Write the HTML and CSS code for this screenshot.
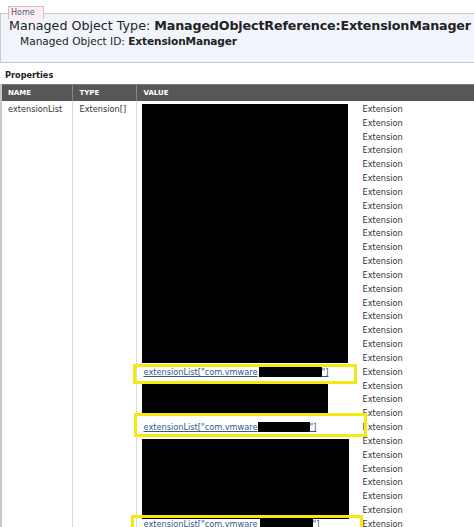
FILE: index.html
```html
<!DOCTYPE html>
<html lang="en">
<head>
    <meta charset="UTF-8">
    <meta name="viewport" content="width=device-width, initial-scale=1.0">
    <title>Managed Object Browser</title>
    <link rel="stylesheet" href="styles.css">
</head>
<body>
    <div class="tabs">
        <a class="tab" href="#">Home</a>
    </div>

    <div class="objhead">
        <h1>Managed Object Type: <b>ManagedObjectReference:ExtensionManager</b></h1>
        <h2>Managed Object ID: <b>ExtensionManager</b></h2>
    </div>

    <h3 class="section">Properties</h3>

    <table class="props">
        <colgroup>
            <col class="c-name">
            <col class="c-type">
            <col>
        </colgroup>
        <thead>
            <tr><th>NAME</th><th>TYPE</th><th>VALUE</th></tr>
        </thead>
        <tbody>
            <tr>
                <td>extensionList</td>
                <td>Extension[]</td>
                <td class="value">
                    <div class="vlist">
                        <div class="redact redact-a"></div>
                        <div class="link-row row-20 mark-a">
                            <a href="#">extensionList["com.vmware<span class="hide hide-a"></span>"]</a>
                        </div>
                        <div class="redact redact-b"></div>
                        <div class="link-row row-24 mark-b">
                            <a href="#">extensionList["com.vmware<span class="hide hide-b"></span>"]</a>
                        </div>
                        <div class="redact redact-c"></div>
                        <div class="link-row row-31 mark-c">
                            <a href="#">extensionList["com.vmware<span class="hide hide-c"></span>"]</a>
                        </div>

                        <div class="ext">Extension</div>
                        <div class="ext">Extension</div>
                        <div class="ext">Extension</div>
                        <div class="ext">Extension</div>
                        <div class="ext">Extension</div>
                        <div class="ext">Extension</div>
                        <div class="ext">Extension</div>
                        <div class="ext">Extension</div>
                        <div class="ext">Extension</div>
                        <div class="ext">Extension</div>
                        <div class="ext">Extension</div>
                        <div class="ext">Extension</div>
                        <div class="ext">Extension</div>
                        <div class="ext">Extension</div>
                        <div class="ext">Extension</div>
                        <div class="ext">Extension</div>
                        <div class="ext">Extension</div>
                        <div class="ext">Extension</div>
                        <div class="ext">Extension</div>
                        <div class="ext">Extension</div>
                        <div class="ext">Extension</div>
                        <div class="ext">Extension</div>
                        <div class="ext">Extension</div>
                        <div class="ext">Extension</div>
                        <div class="ext">Extension</div>
                        <div class="ext">Extension</div>
                        <div class="ext">Extension</div>
                        <div class="ext">Extension</div>
                        <div class="ext">Extension</div>
                        <div class="ext">Extension</div>
                        <div class="ext">Extension</div>
                    </div>
                </td>
            </tr>
        </tbody>
    </table>
</body>
</html>
```

FILE: styles.css
```css
*{
    margin: 0px;
    padding: 0px;
    box-sizing: border-box;
}

body{
    font-family: "DejaVu Sans", Verdana, sans-serif;
    color: #333;
    background-color: white;
    overflow: hidden;
}

/* tab strip */
.tabs{
    height: 13px;
    padding-left: 8px;
}

.tab{
    display: inline-block;
    height: 13px;
    padding: 0px 8px 0px 2px;
    font-size: 8px;
    line-height: 12px;
    color: #4c5d8c;
    text-decoration: none;
    background-color: #fcedf0;
    border: 1px solid #dcbcc4;
    border-bottom: none;
}

/* object header */
.objhead{
    border: 1px solid #c6cad1;
    border-right: none;
    background-color: #f1f5fb;
    padding: 4px 0px 14px 8px;
    white-space: nowrap;
    height: 50px;
}

.objhead h1{
    font-size: 12.7px;
    line-height: 15px;
    font-weight: normal;
    color: #222;
}

.objhead h2{
    font-size: 10.6px;
    line-height: 13px;
    font-weight: normal;
    color: #222;
    margin-top: 2px;
    padding-left: 11px;
}

.objhead b{
    font-weight: bold;
    letter-spacing: -0.15px;
}

.section{
    font-size: 8.2px;
    line-height: 10px;
    font-weight: bold;
    color: #222;
    margin: 7px 0px 4px 5px;
}

/* property table */
.props{
    width: 100%;
    border-collapse: collapse;
    table-layout: fixed;
    border-left: 2px solid #c8c8c8;
}

.c-name{ width: 71px; }
.c-type{ width: 64px; }

.props th{
    background-color: #575757;
    color: white;
    font-size: 7px;
    line-height: 16px;
    height: 16px;
    text-align: left;
    padding-left: 7px;
    border-left: 1px solid #8a8a8a;
    border-top: 1px solid #7a7a7a;
}

.props th:first-child{
    border-left: none;
    padding-left: 6px;
}

.props td{
    vertical-align: top;
    font-size: 8.2px;
    line-height: 13.83px;
    padding: 2px 0px 0px 7px;
    border-left: 1px solid #dadada;
    white-space: nowrap;
}

.props td:first-child{
    border-left: none;
    padding-left: 6px;
}

.vlist{
    display: grid;
    grid-template-columns: 219px auto;
    grid-auto-rows: 13.83px;
}

.ext{
    grid-column: 2;
}

/* blacked out values */
.redact{
    grid-column: 1;
    background-color: #000;
    margin-left: -2px;
}

.redact-a{
    grid-row: 1 / span 19;
    width: 206px;
    margin-top: 1px;
    margin-bottom: 3px;
}

.redact-b{
    grid-row: 21 / span 3;
    width: 186px;
    margin-top: 2.5px;
    margin-bottom: 8px;
}

.redact-c{
    grid-row: 25 / span 6;
    width: 207px;
    margin-top: 4px;
    margin-bottom: -1px;
}

.link-row{
    grid-column: 1;
    position: relative;
}

.row-20{ grid-row: 20; }
.row-24{ grid-row: 24; }
.row-31{ grid-row: 31; }

.link-row a{
    color: #34568b;
    text-decoration: underline;
}

.hide{
    display: inline-block;
    height: 10px;
    background-color: #000;
    vertical-align: -2px;
}

.hide-a{ width: 63px; margin-left: 1px; }
.hide-b{ width: 52px; }
.hide-c{ width: 53px; margin-left: 2px; }

/* yellow highlight boxes */
.link-row::after{
    content: "";
    position: absolute;
    border: 3px solid #f6e912;
}

.mark-a::after{ top: -2px; bottom: -4px; left: -11px; right: 6px; }
.mark-b::after{ top: -8px; bottom: -2px; left: -10px; right: -4px; }
.mark-c::after{ top: -3px; bottom: -8px; left: -13px; right: 0px; }
```
